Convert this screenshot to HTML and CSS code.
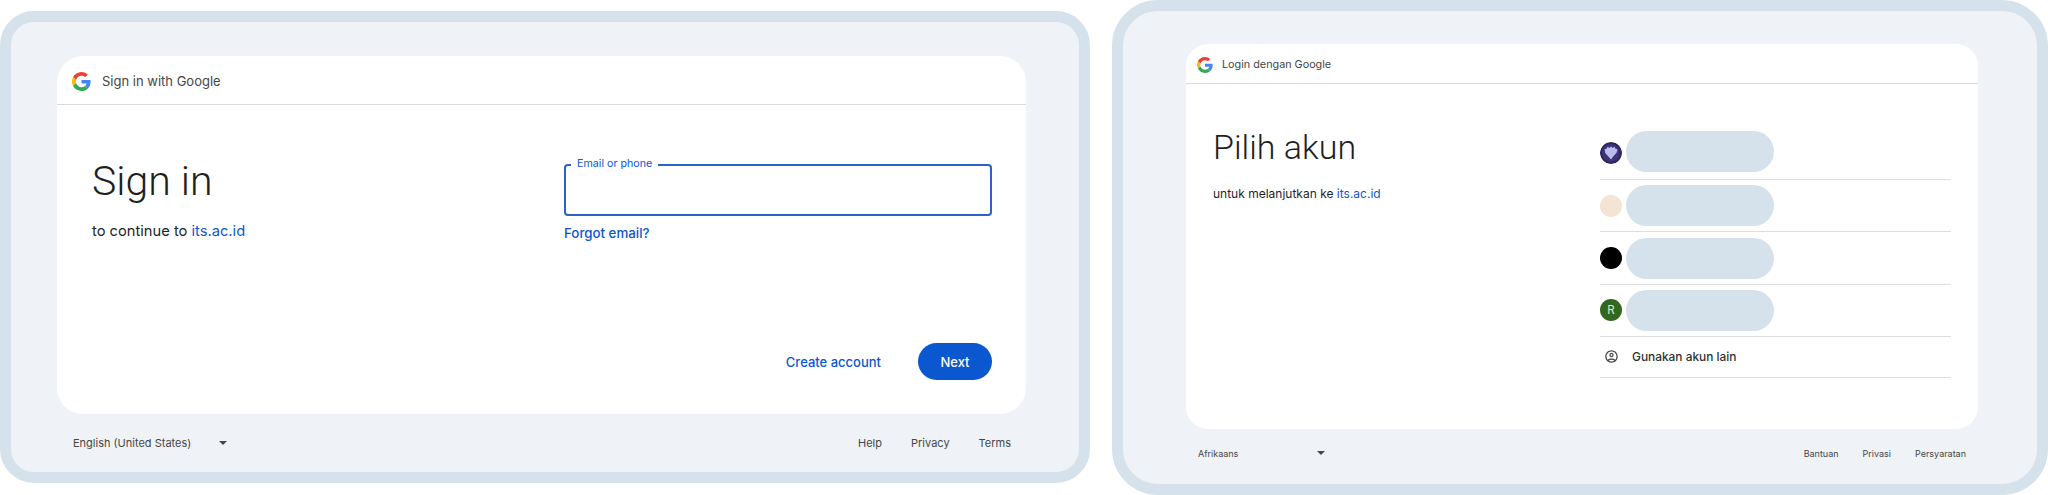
FILE: index.html

```html
<!DOCTYPE html>
<html>
<head>
	<title>Sign in with Google</title>
	<link rel="stylesheet" href="styles.css">
</head>
<body>

<svg width="0" height="0" class="defs">
	<symbol id="logo-g" viewBox="0 0 48 48">
		<path fill="#EA4335" d="M24 9.5c3.54 0 6.71 1.22 9.21 3.6l6.85-6.85C35.9 2.38 30.47 0 24 0 14.62 0 6.51 5.38 2.56 13.22l7.98 6.19C12.43 13.72 17.74 9.5 24 9.5z"/>
		<path fill="#4285F4" d="M46.98 24.55c0-1.57-.15-3.09-.38-4.55H24v9.02h12.94c-.58 2.96-2.26 5.48-4.78 7.18l7.73 6c4.51-4.18 7.09-10.36 7.09-17.65z"/>
		<path fill="#FBBC05" d="M10.53 28.59c-.48-1.45-.76-2.99-.76-4.59s.27-3.14.76-4.59l-7.98-6.19C.92 16.46 0 20.12 0 24c0 3.88.92 7.54 2.56 10.78l7.97-6.19z"/>
		<path fill="#34A853" d="M24 48c6.48 0 11.93-2.13 15.89-5.81l-7.73-6c-2.15 1.45-4.92 2.3-8.16 2.3-6.26 0-11.57-4.22-13.47-9.91l-7.98 6.19C6.51 42.62 14.62 48 24 48z"/>
	</symbol>
</svg>

<div class="page">

	<!-- english screen -->
	<section class="panel panel-en">
		<div class="card card-en">
			<div class="card-head head-en">
				<svg class="logo logo-en"><use href="#logo-g"/></svg>
				<span>Sign in with Google</span>
			</div>
			<div class="body-en">
				<div class="top-en">
					<div class="intro-en">
						<h1 class="title-en">Sign in</h1>
						<p class="sub-en">to continue to <a class="link">its.ac.id</a></p>
					</div>
					<div class="form-en">
						<div class="field">
							<span class="field-label">Email or phone</span>
						</div>
						<a class="forgot">Forgot email?</a>
					</div>
				</div>
				<div class="actions">
					<a class="create">Create account</a>
					<a class="next">Next</a>
				</div>
			</div>
		</div>
		<div class="foot foot-en">
			<div class="lang lang-en">
				<span>English (United States)</span>
				<i class="caret"></i>
			</div>
			<div class="foot-links links-en">
				<a>Help</a>
				<a>Privacy</a>
				<a>Terms</a>
			</div>
		</div>
	</section>

	<!-- indonesian screen -->
	<section class="panel panel-id">
		<div class="card card-id">
			<div class="card-head head-id">
				<svg class="logo logo-id"><use href="#logo-g"/></svg>
				<span>Login dengan Google</span>
			</div>
			<div class="body-id">
				<div class="intro-id">
					<h1 class="title-id">Pilih akun</h1>
					<p class="sub-id">untuk melanjutkan ke <a class="link">its.ac.id</a></p>
				</div>
				<div class="accounts">
					<div class="account">
						<svg class="avatar" viewBox="0 0 22 22">
							<circle cx="11" cy="11" r="11" fill="#2c2560"/>
							<circle cx="11" cy="11" r="9" fill="#3d3578"/>
							<path fill="#b9bdf0" d="M4.5 7.5l2-.8 1.2-2 1.6 1.2L11 4.4l1.700 1.500 1.600-1.200 1.200 2 2 .8-1 3.500-2.500 2.500L11 17.500l-3-3.500-2.500-2.500z"/>
						</svg>
						<div class="pill"></div>
					</div>
					<div class="account">
						<div class="avatar avatar-sand"></div>
						<div class="pill"></div>
					</div>
					<div class="account">
						<div class="avatar avatar-black"></div>
						<div class="pill"></div>
					</div>
					<div class="account">
						<div class="avatar avatar-green">R</div>
						<div class="pill"></div>
					</div>
					<div class="account account-other">
						<svg class="person" viewBox="0 0 24 24"><path fill="#444746" d="M12 2C6.48 2 2 6.48 2 12s4.48 10 10 10 10-4.48 10-10S17.520 2 12 2zM7.350 18.500C8.660 17.560 10.260 17 12 17s3.340.560 4.650 1.500C15.340 19.440 13.740 20 12 20s-3.340-.560-4.650-1.500zm10.790-1.380C16.450 15.800 14.320 15 12 15s-4.450.800-6.140 2.120C4.700 15.730 4 13.950 4 12c0-4.420 3.580-8 8-8s8 3.580 8 8c0 1.950-.700 3.730-1.860 5.120zM12 6c-1.930 0-3.500 1.570-3.500 3.500S10.070 13 12 13s3.500-1.570 3.500-3.500S13.930 6 12 6zm0 5c-.830 0-1.500-.670-1.500-1.500S11.170 8 12 8s1.500.670 1.500 1.500S12.830 11 12 11z"/></svg>
						<span>Gunakan akun lain</span>
					</div>
				</div>
			</div>
		</div>
		<div class="foot foot-id">
			<div class="lang lang-id">
				<span>Afrikaans</span>
				<i class="caret"></i>
			</div>
			<div class="foot-links links-id">
				<a>Bantuan</a>
				<a>Privasi</a>
				<a>Persyaratan</a>
			</div>
		</div>
	</section>

</div>

</body>
</html>
```

FILE: styles.css

```css
* {
	box-sizing: border-box;
}

body {
	margin: 0;
	background-color: #ffffff;
	font-family: Inter, Roboto, "Liberation Sans", sans-serif;
	color: #1f1f1f;
}

.defs {
	display: block;
	height: 0;
}

h1, p {
	margin: 0;
	font-weight: 400;
}

.page {
	display: flex;
	gap: 22px;
	width: 2048px;
	height: 495px;
}

.panel {
	background-color: #eff3f8;
	border: 11px solid #d6e2eb;
	border-radius: 34px;
}

.panel-en {
	width: 1090px;
	height: 472px;
	margin-top: 11px;
	padding: 34px 53px 0 46px;
}

.panel-id {
	width: 936px;
	height: 495px;
	border-radius: 46px;
	padding: 33px 59px 0 63px;
}

.card {
	background-color: #ffffff;
	display: flex;
	flex-direction: column;
}

.card-en {
	height: 358px;
	border-radius: 26px;
}

.card-id {
	height: 385px;
	border-radius: 22px;
}

.card-head {
	display: flex;
	align-items: center;
	border-bottom: 1px solid #d9d9d9;
	color: #444746;
}

.head-en {
	height: 49px;
	padding: 2px 0 0 15px;
	gap: 11px;
	font-size: 13px;
}

.head-id {
	height: 40px;
	padding: 2px 0 0 11px;
	gap: 9px;
	font-size: 10.8px;
}

.logo {
	display: block;
}

.logo-en {
	width: 19px;
	height: 19px;
}

.logo-id {
	width: 16px;
	height: 16px;
}

.link {
	color: #0b57d0;
}

/* english screen */
.body-en {
	flex: 1;
	display: flex;
	flex-direction: column;
	padding: 52px 34px 34px 35px;
}

.top-en {
	display: flex;
	justify-content: space-between;
}

.title-en {
	font-family: Roboto, sans-serif;
	font-size: 41px;
	font-weight: 300;
	line-height: 48px;
}

.sub-en {
	margin-top: 15px;
	font-size: 14.7px;
	line-height: 22px;
}

.form-en {
	width: 428px;
	margin-top: 7px;
}

.field {
	position: relative;
	height: 52px;
	border: 2px solid #2a63cb;
	border-radius: 4px;
}

.field-label {
	position: absolute;
	top: -9px;
	left: 5px;
	padding: 0 6px;
	background-color: #ffffff;
	font-size: 10.700px;
	line-height: 14px;
	color: #0b57d0;
}

.forgot {
	display: block;
	margin-top: 8px;
	font-size: 13.300px;
	font-weight: 500;
	line-height: 18px;
	color: #0b57d0;
}

.actions {
	margin-top: auto;
	display: flex;
	justify-content: flex-end;
	align-items: center;
	gap: 37px;
}

.create {
	font-size: 13px;
	font-weight: 500;
	color: #0b57d0;
}

.next {
	display: flex;
	align-items: center;
	justify-content: center;
	width: 74px;
	height: 37px;
	border-radius: 20px;
	background-color: #0b57d0;
	color: #ffffff;
	font-size: 13px;
	font-weight: 500;
}

/* indonesian screen */
.body-id {
	flex: 1;
	display: flex;
	justify-content: space-between;
	padding: 43px 27px 0 27px;
}

.title-id {
	font-family: Roboto, sans-serif;
	font-size: 34px;
	font-weight: 300;
	line-height: 40px;
}

.sub-id {
	margin-top: 17px;
	font-size: 12px;
	line-height: 20px;
}

.accounts {
	width: 351px;
	margin-top: -1px;
}

.account {
	display: flex;
	align-items: center;
	gap: 4px;
	height: 52.3px;
	border-bottom: 1px solid #dedede;
}

.account:first-child {
	height: 54px;
}

.account:first-child .pill {
	margin-top: -2px;
}

.account:nth-child(3) .pill {
	margin-top: 2px;
}

.account-other {
	height: 41px;
	gap: 13px;
	padding-left: 4px;
	font-size: 11.900px;
	font-weight: 500;
	color: #2f3134;
}

.avatar {
	flex: none;
	width: 22px;
	height: 22px;
	border-radius: 50%;
	display: flex;
	align-items: center;
	justify-content: center;
}

.avatar-sand {
	background-color: #f3e4d3;
}

.avatar-black {
	background-color: #000000;
}

.avatar-green {
	background-color: #33691e;
	color: #dfe9d8;
	font-size: 11.500px;
}

.pill {
	width: 148px;
	height: 41px;
	border-radius: 21px;
	background-color: #d6e2eb;
}

.person {
	width: 15px;
	height: 15px;
}

/* footers */
.foot {
	display: flex;
	justify-content: space-between;
	align-items: center;
	color: #444746;
}

.foot-en {
	height: 58px;
	margin-left: 16px;
	margin-right: 15px;
	font-size: 11px;
}

.foot-id {
	height: 48px;
	margin-left: 12px;
	margin-right: 12px;
	font-size: 9px;
}

.lang {
	display: flex;
	align-items: center;
	justify-content: space-between;
}

.lang-en {
	width: 154px;
}

.lang-id {
	width: 127px;
}

.caret {
	width: 0;
	height: 0;
	border-left: 4px solid transparent;
	border-right: 4px solid transparent;
	border-top: 4px solid #444746;
}

.foot-links {
	display: flex;
}

.links-en {
	gap: 29px;
}

.links-id {
	gap: 24px;
}
```
